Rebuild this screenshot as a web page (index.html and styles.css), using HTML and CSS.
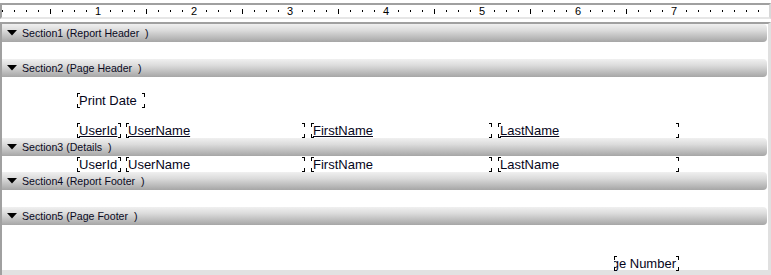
FILE: index.html
```html
<!DOCTYPE html>
<html lang="en">
<head>
    <meta charset="UTF-8">
    <title>Report Designer</title>
    <link rel="stylesheet" href="styles.css">
</head>
<body>
    <div class="ruler">
        <div class="inch"><span class="num">1</span></div>
        <div class="inch"><span class="num">2</span></div>
        <div class="inch"><span class="num">3</span></div>
        <div class="inch"><span class="num">4</span></div>
        <div class="inch"><span class="num">5</span></div>
        <div class="inch"><span class="num">6</span></div>
        <div class="inch"><span class="num">7</span></div>
    </div>

    <div class="surface">
        <div class="band"><svg class="arrow" width="10" height="6" viewBox="0 0 10 6"><polygon points="0,0 10,0 5,5.5" fill="#000"/></svg><span class="title">Section1 (Report Header  )</span></div>
        <div class="area area-s1"></div>

        <div class="band"><svg class="arrow" width="10" height="6" viewBox="0 0 10 6"><polygon points="0,0 10,0 5,5.5" fill="#000"/></svg><span class="title">Section2 (Page Header  )</span></div>
        <div class="area area-s2">
            <div class="row">
                <div class="fld f-date">Print Date</div>
            </div>
            <div class="row row-cols">
                <div class="fld f-id link">UserId</div>
                <div class="fld f-name link">UserName</div>
                <div class="fld f-first link">FirstName</div>
                <div class="fld f-last link">LastName</div>
            </div>
        </div>

        <div class="band"><svg class="arrow" width="10" height="6" viewBox="0 0 10 6"><polygon points="0,0 10,0 5,5.5" fill="#000"/></svg><span class="title">Section3 (Details  )</span></div>
        <div class="area area-s3">
            <div class="row">
                <div class="fld f-id">UserId</div>
                <div class="fld f-name">UserName</div>
                <div class="fld f-first">FirstName</div>
                <div class="fld f-last">LastName</div>
            </div>
        </div>

        <div class="band"><svg class="arrow" width="10" height="6" viewBox="0 0 10 6"><polygon points="0,0 10,0 5,5.5" fill="#000"/></svg><span class="title">Section4 (Report Footer  )</span></div>
        <div class="area area-s4"></div>

        <div class="band"><svg class="arrow" width="10" height="6" viewBox="0 0 10 6"><polygon points="0,0 10,0 5,5.5" fill="#000"/></svg><span class="title">Section5 (Page Footer  )</span></div>
        <div class="area area-s5">
            <div class="row">
                <div class="fld f-page"><span>Page Number</span></div>
            </div>
        </div>
    </div>
    <div class="bottom"></div>
</body>
</html>
```

FILE: styles.css
```css
html, body {
    margin: 0;
    padding: 0;
}
body {
    width: 771px;
    height: 275px;
    overflow: hidden;
    background-color: #ffffff;
    font-family: "Liberation Sans", Arial, sans-serif;
    color: #000;
}

/* ruler */
.ruler {
    display: flex;
    margin-top: 3px;
    margin-bottom: 3px;
    height: 12px;
    border-top: 2px solid #a0a0a0;
    border-left: 2px solid #a0a0a0;
    border-right: 2px solid #d8d8d8;
    border-bottom: 2px solid #e6e6e6;
    background-color: #fff;
    background-image:
        linear-gradient(#000, #000),
        linear-gradient(to right, #000 1px, transparent 1px);
    background-size: 1px 5px, 12px 2px;
    background-position: 48px 4px, 12px 5px;
    background-repeat: no-repeat, repeat-x;
}
.inch {
    width: 96px;
    flex: none;
    display: flex;
    justify-content: flex-end;
    background-image: linear-gradient(#000, #000);
    background-size: 1px 5px;
    background-position: 48px 4px;
    background-repeat: no-repeat;
}
.num {
    width: 10px;
    margin-right: -5px;
    background-color: #fff;
    text-align: center;
    font-size: 11px;
    line-height: 12px;
    position: relative;
    z-index: 1;
}

/* design surface */
.surface {
    border-top: 2px solid #a0a0a0;
    border-left: 2px solid #a0a0a0;
    border-right: 3px solid #e0e0e0;
}
.band {
    height: 18px;
    display: flex;
    align-items: center;
    padding-left: 5px;
    margin-right: 1px;
    border-radius: 0 4px 4px 0;
    background: linear-gradient(#f0f0f0, #dcdcdc 35%, #a6a6a6);
}
.arrow {
    margin-right: 5px;
}
.title {
    font-size: 10.6px;
    white-space: pre;
    color: #0a0a1e;
}
.area {
    box-sizing: border-box;
    background-color: #fff;
}
.area-s1 { height: 17px; }
.area-s2 { height: 61px; padding-top: 16px; }
.area-s3 { height: 16px; padding-top: 1px; }
.area-s4 { height: 17px; }
.area-s5 { height: 45px; padding-top: 31px; }

.row {
    display: flex;
    padding-left: 75px;
}
.row-cols {
    margin-top: 15px;
}

/* report fields with corner marks */
.fld {
    box-sizing: border-box;
    height: 15px;
    padding-left: 2px;
    font-size: 13px;
    line-height: 15px;
    white-space: nowrap;
    overflow: hidden;
    color: #05051a;
    background-image:
        linear-gradient(#000, #000), linear-gradient(#000, #000),
        linear-gradient(#000, #000), linear-gradient(#000, #000),
        linear-gradient(#000, #000), linear-gradient(#000, #000),
        linear-gradient(#000, #000), linear-gradient(#000, #000);
    background-size:
        1px 4px, 3px 1px,
        1px 4px, 3px 1px,
        1px 4px, 3px 1px,
        1px 4px, 3px 1px;
    background-position:
        left top, left top,
        left bottom, left bottom,
        right top, right top,
        right bottom, right bottom;
    background-repeat: no-repeat;
}
.link {
    text-decoration: underline;
}
.f-date { width: 68px; }
.f-id { width: 44px; }
.f-name { width: 179px; margin-left: 5px; }
.f-first { width: 181px; margin-left: 6px; }
.f-last { width: 181px; margin-left: 6px; }
.f-page {
    width: 65px;
    margin-left: 537px;
    display: flex;
    justify-content: flex-end;
    padding-left: 0;
    padding-right: 3px;
}

.bottom {
    height: 5px;
    background-color: #e2e2e2;
    border-left: 2px solid #a0a0a0;
}
```
